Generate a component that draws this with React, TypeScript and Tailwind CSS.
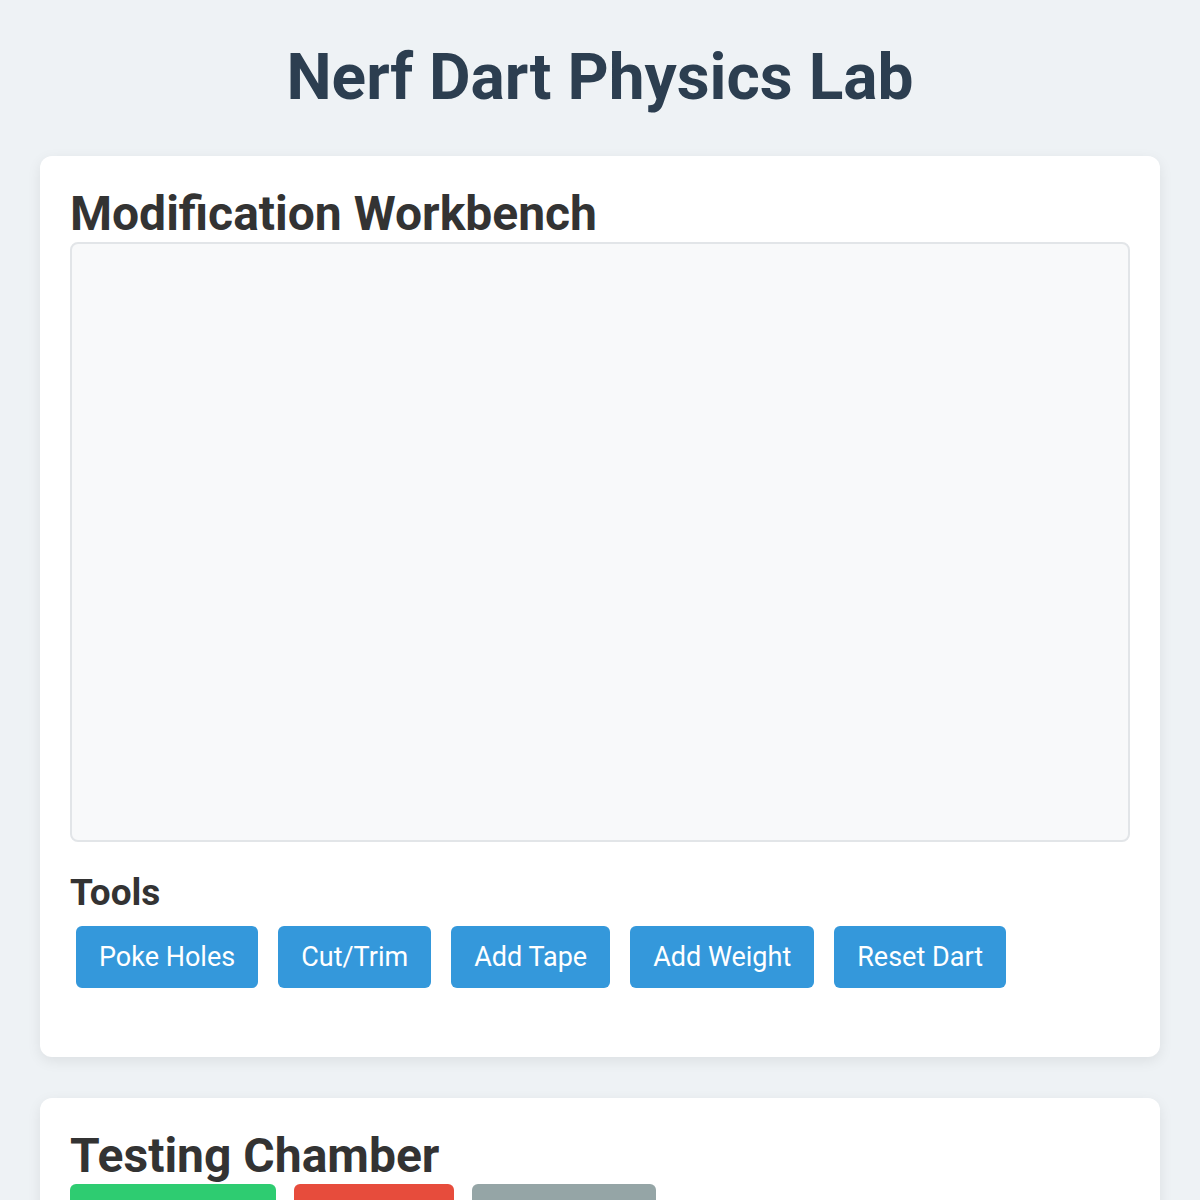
const tools = ["Poke Holes", "Cut/Trim", "Add Tape", "Add Weight", "Reset Dart"];

export default function App() {
  return (
    <div className="min-h-[1200px] bg-[#eef2f5] px-10 pt-[28px] pb-10 font-['Roboto',sans-serif]">
      <h1 className="text-center text-[64px] leading-[100px] font-bold text-[#2c3e50]">Nerf Dart Physics Lab</h1>

      <section className="mt-[28px] rounded-[12px] bg-white p-[30px] shadow-[0_4px_14px_rgba(0,0,0,0.08)]">
        <h2 className="text-[48px] leading-[56px] font-bold text-[#333]">Modification Workbench</h2>
        <div className="h-[600px] rounded-[8px] border-2 border-[#e2e5e8] bg-[#f8f9fa]" />

        <h3 className="mt-[30px] text-[37px] leading-[42px] font-bold text-[#333]">Tools</h3>
        <div className="mt-[12px] ml-[6px] mb-[39px] flex gap-[20px]">
          {tools.map((t) => (
            <button
              key={t}
              className="h-[62px] rounded-[6px] bg-[#3498db] px-[23px] text-[27px] text-white"
            >
              {t}
            </button>
          ))}
        </div>
      </section>

      <section className="mt-[41px] rounded-[12px] bg-white px-[30px] pt-[30px] pb-[30px] shadow-[0_4px_14px_rgba(0,0,0,0.08)]">
        <h2 className="text-[48px] leading-[56px] font-bold text-[#333]">Testing Chamber</h2>
        <div className="flex gap-[18px]">
          <div className="h-[62px] w-[206px] rounded-[6px] bg-[#2ecc71]" />
          <div className="h-[62px] w-[160px] rounded-[6px] bg-[#e74c3c]" />
          <div className="h-[62px] w-[184px] rounded-[6px] bg-[#95a5a6]" />
        </div>
      </section>
    </div>
  );
}
